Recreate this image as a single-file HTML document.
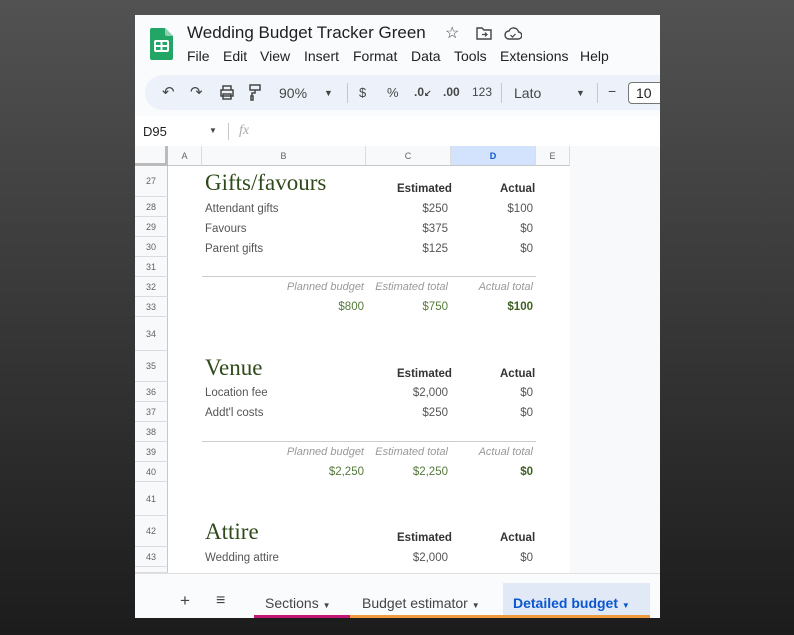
<!DOCTYPE html>
<html><head><meta charset="utf-8"><style>
*{margin:0;padding:0;box-sizing:border-box}
body{width:794px;height:635px;overflow:hidden;background:linear-gradient(180deg,#525252 0%,#3a3a3a 45%,#1c1c1c 100%);font-family:"Liberation Sans",sans-serif;position:relative}
.p{position:absolute;left:135px;top:15px;width:525px;height:603px;background:#f9fbfd;overflow:hidden}
.a{position:absolute;white-space:nowrap}
.menu{font-size:14px;color:#202124;top:33px}
.tb{position:absolute;left:10px;top:60px;width:530px;height:35px;background:#edf2fa;border-radius:18px}
.ti{position:absolute;font-size:13px;color:#444746;top:70px}
.rh{position:absolute;left:0;width:33px;background:#f8f9fa;border-bottom:1px solid #dadce0;border-right:1px solid #c7c7c7;font-size:9px;color:#5f6368;text-align:center}
.ch{position:absolute;top:131px;height:20px;border-right:1px solid #dadce0;border-bottom:1px solid #c7c7c7;background:#f8f9fa;font-size:9px;color:#5f6368;text-align:center;line-height:20px}
.h{font-family:"Liberation Serif",serif;font-size:23px;color:#2f4a1a}
.l{font-size:11.5px;color:#555}
.r{text-align:right;font-size:11.5px;color:#555}
.b{font-weight:bold;color:#333;font-size:11.5px}
.it{font-style:italic;color:#999;font-size:11px;text-align:right}
.g{color:#56793a;font-size:11.5px;text-align:right}
.gb{color:#3f5f24;font-weight:bold;font-size:11.5px;text-align:right}
</style></head><body>
<div class="p">
<svg class="a" style="left:15px;top:13px" width="23" height="32" viewBox="0 0 23 32"><path d="M2 0h13l8 8v22a2 2 0 0 1-2 2H2a2 2 0 0 1-2-2V2a2 2 0 0 1 2-2z" fill="#23a566"/><path d="M15 0l8 8h-6a2 2 0 0 1-2-2z" fill="#8ed1b1"/><rect x="5" y="13" width="13" height="10" rx="1" fill="none" stroke="#fff" stroke-width="2"/><path d="M5 18h13M11.5 13v10" stroke="#fff" stroke-width="2"/></svg>
<div class="a" style="left:52px;top:8px;font-size:17px;color:#1f1f1f">Wedding Budget Tracker Green</div>
<div class="a" style="left:310px;top:8px;font-size:16px;color:#444">☆</div>
<svg class="a" style="left:341px;top:12px" width="16" height="13"><path d="M1 1h5l2 2h7v9H1z" fill="none" stroke="#444" stroke-width="1.4"/><path d="M6 7.5h5M9 5.5l2 2-2 2" stroke="#444" stroke-width="1.2" fill="none"/></svg>
<svg class="a" style="left:369px;top:12px" width="18" height="13"><path d="M5 12h9a3.5 3.5 0 0 0 .5-7A5 5 0 0 0 5 4a4 4 0 0 0 0 8z" fill="none" stroke="#444" stroke-width="1.4"/><path d="M6.5 8l2 2 3-3" stroke="#444" stroke-width="1.2" fill="none"/></svg>
<div class="a menu" style="left:52px">File</div>
<div class="a menu" style="left:88px">Edit</div>
<div class="a menu" style="left:125px">View</div>
<div class="a menu" style="left:169px">Insert</div>
<div class="a menu" style="left:218px">Format</div>
<div class="a menu" style="left:276px">Data</div>
<div class="a menu" style="left:319px">Tools</div>
<div class="a menu" style="left:365px">Extensions</div>
<div class="a menu" style="left:445px">Help</div>
<div class="tb"></div>
<div class="ti" style="left:27px;font-size:15px;top:68px">↶</div>
<div class="ti" style="left:55px;font-size:15px;top:68px">↷</div>
<svg class="a" style="left:84px;top:70px" width="16" height="15"><path d="M4 5V1h8v4M2 5h12v6H2zM4 9h8v5H4z" fill="none" stroke="#444" stroke-width="1.5"/></svg>
<svg class="a" style="left:114px;top:69px" width="14" height="17"><path d="M1 1h10v5H1zM6 6v3H3v3M2 12h2v4H2z" fill="none" stroke="#444" stroke-width="1.5"/></svg>
<div class="ti" style="left:144px;font-size:14px">90%</div>
<div class="ti" style="left:189px;font-size:9px;top:73px">▼</div>
<div class="a" style="left:212px;top:68px;width:1px;height:20px;background:#c7c7c7"></div>
<div class="ti" style="left:224px">$</div>
<div class="ti" style="left:252px">%</div>
<div class="ti" style="left:279px;font-weight:bold;font-size:12px">.0<span style="font-size:9px">↙</span></div>
<div class="ti" style="left:308px;font-weight:bold;font-size:12px">.00</div>
<div class="ti" style="left:337px;font-size:12px">123</div>
<div class="a" style="left:366px;top:68px;width:1px;height:20px;background:#c7c7c7"></div>
<div class="ti" style="left:379px;font-size:14px">Lato</div>
<div class="ti" style="left:441px;font-size:9px;top:73px">▼</div>
<div class="a" style="left:462px;top:68px;width:1px;height:20px;background:#c7c7c7"></div>
<div class="ti" style="left:473px;font-size:14px;top:68px">−</div>
<div class="a" style="left:493px;top:67px;width:35px;height:22px;border:1px solid #747775;border-radius:4px;background:#fff;font-size:14px;color:#1f1f1f;padding:2px 0 0 7px">10</div>
<div class="a" style="left:0;top:101px;width:525px;height:30px;background:#fff"></div>
<div class="a" style="left:8px;top:109px;font-size:13px;color:#1f1f1f">D95</div>
<div class="a" style="left:74px;top:111px;font-size:8px;color:#444">▼</div>
<div class="a" style="left:93px;top:108px;width:1px;height:17px;background:#c7c7c7"></div>
<div class="a" style="left:104px;top:108px;font-size:14px;font-style:italic;color:#aaa;font-family:'Liberation Serif',serif">fx</div>
<div class="a" style="left:0;top:131px;width:525px;height:427px;background:#fff"></div>
<div class="a" style="left:435px;top:131px;width:90px;height:427px;background:#f8f9fa"></div>
<div class="ch" style="left:0;width:33px;border-right:3px solid #bbb;border-bottom:3px solid #bbb"></div>
<div class="ch" style="left:33px;width:34px">A</div>
<div class="ch" style="left:67px;width:164px">B</div>
<div class="ch" style="left:231px;width:85px">C</div>
<div class="ch" style="left:316px;width:85px;background:#d3e3fd;color:#0b57d0;font-weight:bold">D</div>
<div class="ch" style="left:401px;width:34px">E</div>
<div class="rh" style="top:151px;height:31px;line-height:31px">27</div>
<div class="rh" style="top:182px;height:20px;line-height:20px">28</div>
<div class="rh" style="top:202px;height:20px;line-height:20px">29</div>
<div class="rh" style="top:222px;height:20px;line-height:20px">30</div>
<div class="rh" style="top:242px;height:20px;line-height:20px">31</div>
<div class="rh" style="top:262px;height:20px;line-height:20px">32</div>
<div class="rh" style="top:282px;height:20px;line-height:20px">33</div>
<div class="rh" style="top:302px;height:34px;line-height:34px">34</div>
<div class="rh" style="top:336px;height:31px;line-height:31px">35</div>
<div class="rh" style="top:367px;height:20px;line-height:20px">36</div>
<div class="rh" style="top:387px;height:20px;line-height:20px">37</div>
<div class="rh" style="top:407px;height:20px;line-height:20px">38</div>
<div class="rh" style="top:427px;height:20px;line-height:20px">39</div>
<div class="rh" style="top:447px;height:20px;line-height:20px">40</div>
<div class="rh" style="top:467px;height:34px;line-height:34px">41</div>
<div class="rh" style="top:501px;height:31px;line-height:31px">42</div>
<div class="rh" style="top:532px;height:20px;line-height:20px">43</div>
<div class="rh" style="top:552px;height:6px;line-height:20px"></div>

<div class="a h" style="left:70px;top:155px">Gifts/favours</div>
<div class="a b" style="left:262px;top:168px">Estimated</div>
<div class="a b" style="left:365px;top:168px">Actual</div>
<div class="a l" style="left:70px;top:188px">Attendant gifts</div>
<div class="a l" style="left:70px;top:208px">Favours</div>
<div class="a l" style="left:70px;top:228px">Parent gifts</div>
<div class="a r" style="left:231px;width:82px;top:188px">$250</div>
<div class="a r" style="left:231px;width:82px;top:208px">$375</div>
<div class="a r" style="left:231px;width:82px;top:228px">$125</div>
<div class="a r" style="left:316px;width:82px;top:188px">$100</div>
<div class="a r" style="left:316px;width:82px;top:208px">$0</div>
<div class="a r" style="left:316px;width:82px;top:228px">$0</div>
<div class="a" style="left:67px;top:261px;width:334px;height:1px;background:#ccc"></div>
<div class="a it" style="left:67px;width:162px;top:266px">Planned budget</div>
<div class="a it" style="left:231px;width:82px;top:266px">Estimated total</div>
<div class="a it" style="left:316px;width:82px;top:266px">Actual total</div>
<div class="a g" style="left:67px;width:162px;top:286px">$800</div>
<div class="a g" style="left:231px;width:82px;top:286px">$750</div>
<div class="a gb" style="left:316px;width:82px;top:286px">$100</div>

<div class="a h" style="left:70px;top:340px">Venue</div>
<div class="a b" style="left:262px;top:353px">Estimated</div>
<div class="a b" style="left:365px;top:353px">Actual</div>
<div class="a l" style="left:70px;top:372px">Location fee</div>
<div class="a l" style="left:70px;top:392px">Addt'l costs</div>
<div class="a r" style="left:231px;width:82px;top:372px">$2,000</div>
<div class="a r" style="left:231px;width:82px;top:392px">$250</div>
<div class="a r" style="left:316px;width:82px;top:372px">$0</div>
<div class="a r" style="left:316px;width:82px;top:392px">$0</div>
<div class="a" style="left:67px;top:426px;width:334px;height:1px;background:#ccc"></div>
<div class="a it" style="left:67px;width:162px;top:431px">Planned budget</div>
<div class="a it" style="left:231px;width:82px;top:431px">Estimated total</div>
<div class="a it" style="left:316px;width:82px;top:431px">Actual total</div>
<div class="a g" style="left:67px;width:162px;top:451px">$2,250</div>
<div class="a g" style="left:231px;width:82px;top:451px">$2,250</div>
<div class="a gb" style="left:316px;width:82px;top:451px">$0</div>

<div class="a h" style="left:70px;top:504px">Attire</div>
<div class="a b" style="left:262px;top:517px">Estimated</div>
<div class="a b" style="left:365px;top:517px">Actual</div>
<div class="a l" style="left:70px;top:537px">Wedding attire</div>
<div class="a r" style="left:231px;width:82px;top:537px">$2,000</div>
<div class="a r" style="left:316px;width:82px;top:537px">$0</div>
<div class="a" style="left:0;top:558px;width:525px;height:45px;background:#f9fbfd;border-top:1px solid #e0e0e0"></div>
<div class="a" style="left:45px;top:576px;font-size:17px;color:#444">+</div>
<div class="a" style="left:81px;top:577px;font-size:16px;color:#444">≡</div>
<div class="a" style="left:130px;top:580px;font-size:14px;color:#444">Sections <span style="font-size:8px">▼</span></div>
<div class="a" style="left:227px;top:580px;font-size:14px;color:#444">Budget estimator <span style="font-size:8px">▼</span></div>
<div class="a" style="left:368px;top:568px;width:147px;height:32px;background:#e1e9f7"></div>
<div class="a" style="left:378px;top:580px;font-size:14px;color:#0b57d0;font-weight:bold">Detailed budget <span style="font-size:8px">▼</span></div>
<div class="a" style="left:119px;top:600px;width:96px;height:3px;background:#c2187a"></div>
<div class="a" style="left:215px;top:600px;width:152px;height:3px;background:#f09a3e"></div>
<div class="a" style="left:367px;top:600px;width:148px;height:3px;background:#f09a3e"></div>
</div>
</body></html>
